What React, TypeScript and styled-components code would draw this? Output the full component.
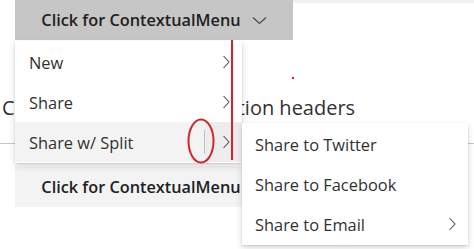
import React from "react";
import styled, { createGlobalStyle } from "styled-components";

const GlobalStyle = createGlobalStyle`
  html, body {
    margin: 0;
    padding: 0;
    background: #ffffff;
  }
  body {
    font-family: "Open Sans", "Noto Sans", sans-serif;
    color: #323130;
  }
`;

const ChevronDown = () => (
  <svg width="15" height="9" viewBox="0 0 15 9">
    <path d="M1 1.5 L7.5 7.5 L14 1.5" fill="none" stroke="#444" strokeWidth="1.1" />
  </svg>
);

const ChevronRight = () => (
  <svg width="8" height="14" viewBox="0 0 8 14">
    <path d="M1.5 1 L7 7 L1.5 13" fill="none" stroke="#555" strokeWidth="1.1" />
  </svg>
);

export default function App() {
  return (
    <>
      <GlobalStyle />
      <Page>
        <TopRow>
          <MenuButton $pressed>
            Click for ContextualMenu
            <ChevronDown />
          </MenuButton>
          <TopStrip />
        </TopRow>

        <Heading>ContextualMenu with section headers</Heading>
        <Rule />

        <MenuButton>
          Click for ContextualMenu
          <ChevronDown />
        </MenuButton>

        <Menu $left={15} $top={41} $width={227}>
          <Item>
            <Label>New</Label>
            <ChevronRight />
          </Item>
          <Item>
            <Label>Share</Label>
            <ChevronRight />
          </Item>
          <SplitItem>
            <SplitMain>
              <Label>Share w/ Split</Label>
            </SplitMain>
            <SplitDivider />
            <SplitArrow>
              <ChevronRight />
            </SplitArrow>
          </SplitItem>
        </Menu>

        <Menu $left={242} $top={123} $width={226}>
          <SubItem>
            <Label>Share to Twitter</Label>
          </SubItem>
          <SubItem>
            <Label>Share to Facebook</Label>
          </SubItem>
          <SubItem>
            <Label>Share to Email</Label>
            <ChevronRight />
          </SubItem>
        </Menu>

        <Marks width="474" height="249" viewBox="0 0 474 249">
          <line x1="232" y1="40" x2="232" y2="160" stroke="#d8232a" strokeWidth="2" />
          <ellipse
            cx="201"
            cy="141"
            rx="12.5"
            ry="21.5"
            fill="none"
            stroke="#d8232a"
            strokeWidth="2"
          />
          <circle cx="293" cy="78" r="1.2" fill="#d8232a" />
        </Marks>
      </Page>
    </>
  );
}

const Page = styled.div`
  position: relative;
  width: 474px;
  height: 249px;
  overflow: hidden;
`;

const TopRow = styled.div`
  display: flex;
  align-items: flex-start;
`;

const TopStrip = styled.div`
  flex: 1;
  height: 3px;
  background: #f0f0f0;
`;

const MenuButton = styled.button<{ $pressed?: boolean }>`
  display: flex;
  align-items: center;
  justify-content: center;
  gap: 11px;
  width: 278px;
  height: ${({ $pressed }) => ($pressed ? "40px" : "41px")};
  margin: 0 0 0 15px;
  padding: 0;
  border: none;
  background: ${({ $pressed }) => ($pressed ? "#c6c6c6" : "#f3f3f3")};
  font-family: "Open Sans", "Noto Sans", sans-serif;
  font-weight: 600;
  font-size: 16.3px;
  color: #201f1e;
  flex-shrink: 0;
`;

const Heading = styled.h2`
  margin: 0;
  padding: 55px 0 0 2px;
  height: 48px;
  font-weight: 400;
  font-size: 20px;
  line-height: 26px;
  color: #323130;
  white-space: nowrap;
`;

const Rule = styled.div`
  height: 1px;
  background: #c8c6c4;
  margin-bottom: 22px;
`;

const Menu = styled.div<{ $left: number; $top: number; $width: number }>`
  position: absolute;
  left: ${({ $left }) => $left}px;
  top: ${({ $top }) => $top}px;
  width: ${({ $width }) => $width}px;
  padding: 1px 0;
  background: #ffffff;
  box-shadow: 0 3px 7px rgba(0, 0, 0, 0.14), 0 0.6px 1.8px rgba(0, 0, 0, 0.12);
`;

const Item = styled.div`
  display: flex;
  align-items: center;
  justify-content: space-between;
  height: 40px;
  padding: 0 12px 0 14px;
`;

const SubItem = styled(Item)`
  padding: 0 12px 0 13px;
`;

const Label = styled.span`
  font-size: 16.4px;
  font-weight: 400;
  color: #323130;
`;

const SplitItem = styled.div`
  display: flex;
  align-items: center;
  height: 40px;
  background: #f3f3f3;
`;

const SplitMain = styled.div`
  flex: 1;
  display: flex;
  align-items: center;
  height: 100%;
  padding-left: 14px;
`;

const SplitDivider = styled.div`
  width: 1px;
  height: 24px;
  background: #c0c0c0;
`;

const SplitArrow = styled.div`
  display: flex;
  align-items: center;
  justify-content: flex-end;
  width: 37px;
  height: 100%;
  padding-right: 12px;
  box-sizing: border-box;
  background: #ededed;
`;

const Marks = styled.svg`
  position: absolute;
  left: 0;
  top: 0;
  pointer-events: none;
`;
